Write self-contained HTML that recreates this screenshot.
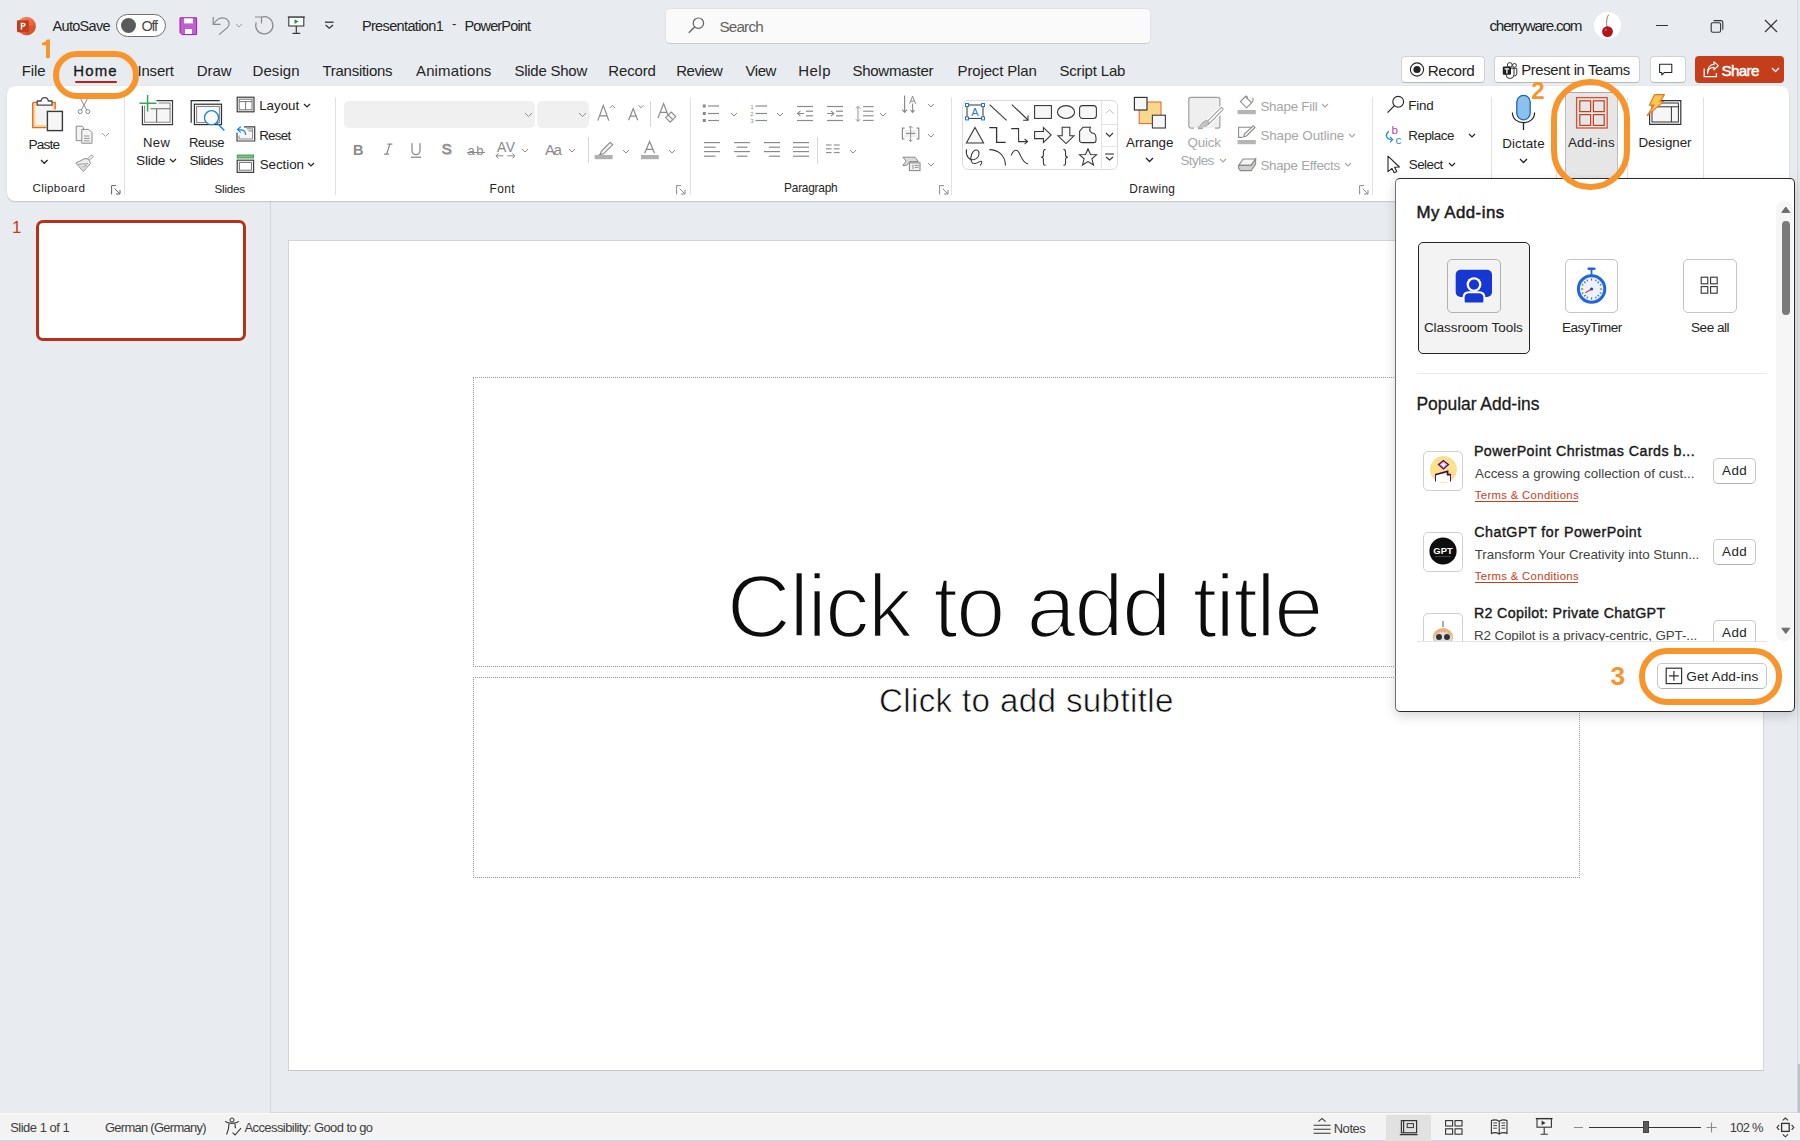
<!DOCTYPE html>
<html><head><meta charset="utf-8">
<style>
*{box-sizing:border-box;margin:0;padding:0}
html,body{width:1800px;height:1141px;overflow:hidden}
body{background:#e8ecf0;font-family:"Liberation Sans",sans-serif;color:#242424;position:relative}
.a{position:absolute;white-space:nowrap}
.tx{line-height:1}
svg.a{overflow:visible}
</style></head><body>
<svg class="a" style="left:14px;top:14px;" width="24" height="24" viewBox="0 0 24 24"><defs><linearGradient id="pg" x1="0" y1="0" x2="1" y2="1"><stop offset="0" stop-color="#ff8f6b"/><stop offset="0.5" stop-color="#ed6c47"/><stop offset="1" stop-color="#c43e1c"/></linearGradient></defs>
<circle cx="12.5" cy="12" r="9.3" fill="url(#pg)"/><path d="M12.5 12 L21.8 12 A9.3 9.3 0 0 1 12.5 21.3Z" fill="#d35230" opacity=".7"/>
<rect x="3" y="6.2" width="12" height="12" rx="1" fill="#c43e1c"/><path d="M6.7 15.5V8.8h2.6c1.5 0 2.3.7 2.3 1.9s-.9 2-2.3 2H8.2v2.8z M8.2 10v1.6h1c.6 0 .9-.3.9-.8s-.3-.8-.9-.8z" fill="#fff"/></svg>
<div class="a tx " style="left:52.50px;top:19.00px;font-size:14.53px;color:#242424;letter-spacing:-0.686px;">AutoSave</div>
<div class="a" style="left:116px;top:14px;width:50px;height:23px;border:1px solid #6e6e6e;border-radius:12px;background:#fff"></div>
<div class="a" style="left:120.5px;top:18px;width:15px;height:15px;border-radius:50%;background:#5a5a5a"></div>
<div class="a tx " style="left:141.40px;top:19.00px;font-size:14.53px;color:#4a4a4a;letter-spacing:-1.250px;">Off</div>
<svg class="a" style="left:179px;top:17px;" width="19" height="19" viewBox="0 0 19 19"><path d="M1 0.8H17.6V17.6H3L1 15.6Z" fill="#c060cf" stroke="#9a1fae" stroke-width="1"/><rect x="5" y="1.4" width="9" height="5" fill="#fff"/><rect x="6" y="12" width="7" height="5" fill="#fff"/></svg>
<svg class="a" style="left:212px;top:16px;" width="20" height="20" viewBox="0 0 20 20"><path d="M1.2 1 V8.4 H8.6" fill="none" stroke="#8a8a8a" stroke-width="1.2"/><path d="M1.6 8 C4.2 3.2 9 0.8 13 2.2 C17.8 4 18.2 8.8 15.4 11.6 L7 18.6" fill="none" stroke="#8a8a8a" stroke-width="1.2"/></svg>
<svg class="a" style="left:235.0px;top:22.5px;" width="8" height="5.0" viewBox="0 0 8 5.0"><path d="M1 1 L4.0 4.0 L7 1" fill="none" stroke="#9a9a9a" stroke-width="1"/></svg>
<svg class="a" style="left:254px;top:16px;" width="20" height="20" viewBox="0 0 20 20"><path d="M1 1 H7.5 V7.4" fill="none" stroke="#8a8a8a" stroke-width="1.2"/><path d="M7.5 1.2 A8.6 8.6 0 1 1 2.2 6.4" fill="none" stroke="#8a8a8a" stroke-width="1.2"/></svg>
<svg class="a" style="left:287px;top:16px;" width="19" height="20" viewBox="0 0 19 20"><path d="M0.8 1.2H17.8" stroke="#3a3a3a" stroke-width="1.4"/><rect x="1.8" y="1.2" width="15" height="8.8" fill="#fff" stroke="#3a3a3a" stroke-width="1.1"/><path d="M7.5 3.2 L11.6 5.6 L7.5 8z" fill="#1e9e3a"/><path d="M9.3 10V17.2 M5.5 17.4H13.2" stroke="#3a3a3a" stroke-width="1.2"/></svg>
<svg class="a" style="left:324px;top:21px;" width="11" height="9" viewBox="0 0 11 9"><path d="M1 1.2H9.6" stroke="#333" stroke-width="1.3"/><path d="M1.6 4 L5.3 7.2 L9 4" fill="none" stroke="#333" stroke-width="1.3"/></svg>
<div class="a tx " style="left:361.90px;top:19.00px;font-size:14.53px;color:#242424;letter-spacing:-0.642px;">Presentation1</div>
<div class="a tx " style="left:452.00px;top:17.00px;font-size:13.00px;color:#242424;">-</div>
<div class="a tx " style="left:464.40px;top:19.00px;font-size:14.53px;color:#242424;letter-spacing:-0.833px;">PowerPoint</div>
<div class="a" style="left:664.5px;top:8px;width:486px;height:36px;background:#fafafa;border:1px solid #e2e2e2;border-bottom-color:#c9c9c9;border-radius:5px"></div>
<svg class="a" style="left:687px;top:16px;" width="19" height="19" viewBox="0 0 19 19"><circle cx="11.4" cy="7.2" r="5.2" fill="none" stroke="#5f5f5f" stroke-width="1.2"/><path d="M7.6 11 L1.8 16.8" stroke="#5f5f5f" stroke-width="1.3"/></svg>
<div class="a tx " style="left:719.40px;top:19.00px;font-size:15.26px;color:#616161;letter-spacing:-0.800px;">Search</div>
<div class="a tx " style="left:1489.40px;top:18.20px;font-size:15.26px;color:#242424;letter-spacing:-1.177px;">cherryware.com</div>
<div class="a" style="left:1594px;top:12px;width:27px;height:27px;border-radius:50%;background:#fff"></div>
<svg class="a" style="left:1594px;top:12px;" width="27" height="27" viewBox="0 0 27 27"><path d="M14.6 2.6 C12.4 6 12.2 10 13 15.4" fill="none" stroke="#7a8a4a" stroke-width="1"/><circle cx="13.5" cy="19.6" r="5.4" fill="#b5121b"/><circle cx="11.8" cy="18" r="1.4" fill="#e56060" opacity=".6"/></svg>
<div class="a" style="left:1656px;top:24.5px;width:12px;height:1.2px;background:#333"></div>
<svg class="a" style="left:1709px;top:19px;" width="15" height="14" viewBox="0 0 15 14"><rect x="2.2" y="3.8" width="9.4" height="9.4" rx="1.5" fill="none" stroke="#333" stroke-width="1.1"/><path d="M4.6 1.6 H11.8 Q13.8 1.6 13.8 3.6 V10.8" fill="none" stroke="#333" stroke-width="1.1"/></svg>
<svg class="a" style="left:1764px;top:19px;" width="14" height="14" viewBox="0 0 14 14"><path d="M1 1 L13 13 M13 1 L1 13" stroke="#333" stroke-width="1.2"/></svg>
<div class="a tx " style="left:21.80px;top:64.00px;font-size:14.97px;color:#242424;letter-spacing:-0.100px;">File</div>
<div class="a tx " style="left:73.30px;top:64.00px;font-size:14.97px;color:#1a1a1a;letter-spacing:1.100px;-webkit-text-stroke:0.3px #1a1a1a">Home</div>
<div class="a tx " style="left:137.45px;top:64.00px;font-size:14.97px;color:#242424;letter-spacing:-0.170px;">Insert</div>
<div class="a tx " style="left:196.80px;top:64.00px;font-size:14.97px;color:#242424;letter-spacing:-0.050px;">Draw</div>
<div class="a tx " style="left:252.55px;top:64.00px;font-size:14.97px;color:#242424;letter-spacing:0.080px;">Design</div>
<div class="a tx " style="left:322.50px;top:64.00px;font-size:14.97px;color:#242424;letter-spacing:-0.260px;">Transitions</div>
<div class="a tx " style="left:416.00px;top:64.00px;font-size:14.97px;color:#242424;letter-spacing:0.144px;">Animations</div>
<div class="a tx " style="left:514.40px;top:64.00px;font-size:14.97px;color:#242424;letter-spacing:-0.222px;">Slide Show</div>
<div class="a tx " style="left:608.30px;top:64.00px;font-size:14.97px;color:#242424;letter-spacing:-0.140px;">Record</div>
<div class="a tx " style="left:676.30px;top:64.00px;font-size:14.97px;color:#242424;letter-spacing:-0.520px;">Review</div>
<div class="a tx " style="left:745.50px;top:64.00px;font-size:14.97px;color:#242424;letter-spacing:-0.433px;">View</div>
<div class="a tx " style="left:798.30px;top:64.00px;font-size:14.97px;color:#242424;letter-spacing:0.467px;">Help</div>
<div class="a tx " style="left:852.40px;top:64.00px;font-size:14.97px;color:#242424;letter-spacing:-0.233px;">Showmaster</div>
<div class="a tx " style="left:957.55px;top:64.00px;font-size:14.97px;color:#242424;letter-spacing:-0.132px;">Project Plan</div>
<div class="a tx " style="left:1059.40px;top:64.00px;font-size:14.97px;color:#242424;letter-spacing:-0.156px;">Script Lab</div>
<div class="a" style="left:74.5px;top:81px;width:42.5px;height:2.2px;background:#b7261a;border-radius:1px"></div>
<div class="a" style="left:1401px;top:56px;width:84px;height:27px;background:#fff;border:1px solid #d1d1d1;border-bottom-color:#b9b9b9;border-radius:4px"></div>
<svg class="a" style="left:1409px;top:62px;" width="16" height="16" viewBox="0 0 16 16"><circle cx="8" cy="7.5" r="6.6" fill="none" stroke="#242424" stroke-width="1.1"/><circle cx="8" cy="7.5" r="3.6" fill="#242424"/></svg>
<div class="a tx " style="left:1427.80px;top:62.50px;font-size:15.26px;color:#242424;letter-spacing:-0.440px;">Record</div>
<div class="a" style="left:1494.4px;top:56px;width:146px;height:27px;background:#fff;border:1px solid #d1d1d1;border-bottom-color:#b9b9b9;border-radius:4px"></div>
<svg class="a" style="left:1502px;top:62px;" width="17" height="16" viewBox="0 0 17 16"><circle cx="12.5" cy="3.4" r="1.9" fill="none" stroke="#333" stroke-width="1"/><path d="M10 6.3h4.8v5.2a2.4 2.4 0 0 1-4.8 0z" fill="#fff" stroke="#333" stroke-width="1"/><circle cx="7.8" cy="3" r="2.4" fill="#fff" stroke="#333" stroke-width="1"/><path d="M4 6.2h8v6.3a4 4 0 0 1-8 0z" fill="#fff" stroke="#333" stroke-width="1"/><rect x="0.8" y="4.6" width="8.2" height="8.2" rx="1" fill="#1f1f1f"/><path d="M2.6 6.8h4.6M4.9 6.8v4.6" stroke="#fff" stroke-width="1.3"/></svg>
<div class="a tx " style="left:1521.20px;top:63.30px;font-size:14.83px;color:#242424;letter-spacing:-0.347px;">Present in Teams</div>
<div class="a" style="left:1649.5px;top:56px;width:36px;height:27px;background:#fff;border:1px solid #d1d1d1;border-bottom-color:#b9b9b9;border-radius:4px"></div>
<svg class="a" style="left:1658px;top:62px;" width="18" height="16" viewBox="0 0 18 16"><path d="M1.6 2.2H13.8V10.4H6.6L3.8 13V10.4H1.6Z" fill="none" stroke="#242424" stroke-width="1.05" stroke-linejoin="round"/></svg>
<div class="a" style="left:1695px;top:56px;width:89.3px;height:27px;background:#c43e1c;border-radius:4px"></div>
<svg class="a" style="left:1702px;top:61px;" width="18" height="18" viewBox="0 0 18 18"><path d="M2.2 7.6V15.6H14.4V12" fill="none" stroke="#fff" stroke-width="1.3"/><path d="M5.6 12.4 C5.8 8.6 8.4 6.4 12 6.4 V8.8 L16.4 4.6 L12 0.9 V3.4 C7.6 3.4 5.2 7.4 5.6 12.4Z" fill="none" stroke="#fff" stroke-width="1.2" stroke-linejoin="round"/></svg>
<div class="a tx " style="left:1721.40px;top:62.50px;font-size:15.26px;color:#fff;letter-spacing:-0.650px;-webkit-text-stroke:0.45px #fff">Share</div>
<svg class="a" style="left:1770.5px;top:66.75px;" width="9" height="5.5" viewBox="0 0 9 5.5"><path d="M1 1 L4.5 4.5 L8 1" fill="none" stroke="#fff" stroke-width="1.25"/></svg>
<div class="a" style="left:270px;top:201px;width:1px;height:912px;background:#d4d7da"></div>
<div class="a tx " style="left:12.10px;top:220.30px;font-size:16.86px;color:#c43e1c;">1</div>
<div class="a" style="left:36px;top:219.5px;width:210px;height:121px;background:#fff;border:3px solid #b5311b;border-radius:7px"></div>
<div class="a" style="left:288px;top:240px;width:1476px;height:831px;background:#fff;border:1px solid #d4d4d4;border-bottom-color:#c8c8c8"></div>
<div class="a" style="left:473.3px;top:376.8px;width:1107px;height:290px;border:1px dotted #9a9a9a"></div>
<div class="a" style="left:473.3px;top:676.5px;width:1107px;height:201.5px;border:1px dotted #9a9a9a"></div>
<div class="a tx " style="left:726.80px;top:561.80px;font-size:88.95px;color:#0d0d0d;letter-spacing:-1.829px;-webkit-text-stroke:2.6px #fff">Click to add title</div>
<div class="a tx " style="left:878.90px;top:683.80px;font-size:33.14px;color:#0d0d0d;letter-spacing:0.365px;-webkit-text-stroke:0.6px #fff">Click to add subtitle</div>
<div class="a" style="left:1797px;top:0px;width:1px;height:1141px;background:#d3d7db"></div>
<div class="a" style="left:1798px;top:0px;width:2px;height:1141px;background:#e4e8ec"></div>
<div class="a" style="left:1798px;top:1064px;width:2px;height:53px;background:#b9c3cc"></div>
<div class="a" style="left:1798px;top:1117px;width:2px;height:24px;background:#1a1a1a"></div>
<div class="a" style="left:7px;top:86px;width:1782.3px;height:114.5px;background:#fff;border-radius:8px;box-shadow:0 1px 1.5px rgba(0,0,0,.16),0 0 1px rgba(0,0,0,.08)"></div>
<svg class="a" style="left:25px;top:90px;" width="45" height="45" viewBox="0 0 45 45"><path d="M7.8 12.4 H30.1 V19.5 M21.4 37.6 H7.8 V12.4" fill="#fdf3d6" stroke="#e36c25" stroke-width="1.5"/>
<path d="M28.2 19.5 V14.4 H9.8 V35.6 H21.4" fill="none" stroke="#f9d98a" stroke-width="1.6"/><rect x="10.8" y="15.4" width="16.4" height="19.2" fill="#f4f4f4"/>
<path d="M12.2 15.2 V11 H16.2 C16.4 6.6 23 6.6 23.2 11 H27 V15.2Z" fill="#fff" stroke="#4a4a4a" stroke-width="1.3" stroke-linejoin="round"/>
<rect x="22.4" y="21.4" width="15" height="19.2" fill="#f6f6f6" stroke="#3a3a3a" stroke-width="1.4"/></svg>
<div class="a tx " style="left:28.50px;top:138.00px;font-size:13.66px;color:#242424;letter-spacing:-0.850px;">Paste</div>
<svg class="a" style="left:39.900000000000006px;top:158.85px;" width="8.6" height="5.3" viewBox="0 0 8.6 5.3"><path d="M1 1 L4.3 4.3 L7.6 1" fill="none" stroke="#242424" stroke-width="1.2"/></svg>
<svg class="a" style="left:76px;top:98px;" width="16" height="17" viewBox="0 0 16 17"><path d="M4.4 0.5 L10.8 12.2 M11.6 0.5 L5.2 12.2" stroke="#8a8a8a" stroke-width="1"/><circle cx="4.2" cy="13.6" r="2" fill="none" stroke="#8a8a8a" stroke-width="1"/><circle cx="11.8" cy="13.6" r="2" fill="none" stroke="#8a8a8a" stroke-width="1"/></svg>
<svg class="a" style="left:74px;top:125px;" width="20" height="20" viewBox="0 0 20 20"><path d="M2.2 1.2H8.2L9.4 2.4V15.6H2.2Z" fill="#f4f4f4" stroke="#8a8a8a" stroke-width="1"/><path d="M7.8 4.4H14.8L18 7.6V18.2H7.8Z" fill="#f4f4f4" stroke="#8a8a8a" stroke-width="1"/><path d="M10 11H15.6M10 13.4H15.6M10 15.8H15.6" stroke="#8a8a8a" stroke-width=".9"/></svg>
<svg class="a" style="left:100.5px;top:132.25px;" width="9" height="5.5" viewBox="0 0 9 5.5"><path d="M1 1 L4.5 4.5 L8 1" fill="none" stroke="#a0a0a0" stroke-width="1"/></svg>
<svg class="a" style="left:74px;top:154px;" width="20" height="20" viewBox="0 0 20 20"><path d="M17.6 0.9 L19.2 2.5 L15.2 6.5 L13.6 4.9Z" fill="#fff" stroke="#8a8a8a" stroke-width="1"/><path d="M13.6 4.9 L15.2 6.5 L16.6 9.2 L9.4 17.6 L1.9 9 L10.9 4.6Z" fill="#efefef" stroke="#8a8a8a" stroke-width="1" stroke-linejoin="round"/><path d="M4.2 10.4 L14 9.6 M6.6 13.2 L13 11.4" stroke="#8a8a8a" stroke-width=".9"/><path d="M4.4 11 L9.4 17.2 L12.6 13.4Z" fill="#d6d6d6"/></svg>
<div class="a tx " style="left:32.60px;top:182.00px;font-size:11.63px;color:#242424;letter-spacing:0.312px;">Clipboard</div>
<svg class="a" style="left:111px;top:185px;" width="10" height="10" viewBox="0 0 10 10"><path d="M0.6 9.4V0.6H5 M3.6 3.6L9 9 M9 5V9H5" fill="none" stroke="#616161" stroke-width="1"/></svg>
<div class="a" style="left:124.4px;top:97px;width:1px;height:98px;background:#e1e1e1"></div>
<svg class="a" style="left:135px;top:90px;" width="40" height="40" viewBox="0 0 40 40"><rect x="9.5" y="13" width="25.6" height="19.2" fill="#f6f6f6"/>
<path d="M21.4 10.6 H37.5 V34.6 H7.4 V15.8" fill="none" stroke="#3c3c3c" stroke-width="1.2"/>
<path d="M23.5 13 H35.1 V32.2 H9.5 V15.8" fill="none" stroke="#8a8a8a" stroke-width="1.1"/>
<path d="M15.5 18.7 H35.1 M21.6 18.7 V32.2" stroke="#6a6a6a" stroke-width="1.1"/>
<path d="M12.6 5 V21.5 M4.5 13.2 H21.5" stroke="#38a65a" stroke-width="1.5"/></svg>
<div class="a tx " style="left:143.00px;top:136.00px;font-size:13.08px;color:#242424;letter-spacing:0.400px;">New</div>
<div class="a tx " style="left:136.10px;top:154.00px;font-size:13.66px;color:#242424;letter-spacing:-0.250px;">Slide</div>
<svg class="a" style="left:168.5px;top:157.5px;" width="8" height="5.0" viewBox="0 0 8 5.0"><path d="M1 1 L4.0 4.0 L7 1" fill="none" stroke="#242424" stroke-width="1.2"/></svg>
<svg class="a" style="left:135px;top:90px;" width="95" height="45" viewBox="0 0 95 45"><path d="M56.2 32.7 V10.6 H84.7" fill="none" stroke="#2e2e2e" stroke-width="1.2"/>
<rect x="59.4" y="14.2" width="27.1" height="20.4" fill="#f6f6f6" stroke="#2e2e2e" stroke-width="1.2"/>
<rect x="61.6" y="16.5" width="22.8" height="16" fill="#fafafa" stroke="#8a8a8a" stroke-width="1.1"/>
<circle cx="76.5" cy="27.7" r="7" fill="#fbfbfb" stroke="#1f84d6" stroke-width="1.3"/><path d="M81.4 32.6 L89.4 40.6" stroke="#1f84d6" stroke-width="1.4"/></svg>
<div class="a tx " style="left:189.00px;top:136.00px;font-size:13.08px;color:#242424;letter-spacing:-0.600px;">Reuse</div>
<div class="a tx " style="left:189.60px;top:154.00px;font-size:13.66px;color:#242424;letter-spacing:-0.660px;">Slides</div>
<svg class="a" style="left:236px;top:96px;" width="20" height="18" viewBox="0 0 20 18"><rect x="1.2" y="1.2" width="16.8" height="14.6" fill="#f3f3f3" stroke="#3e3e3e" stroke-width="1.2"/><rect x="3.2" y="3.2" width="12.8" height="10.6" fill="#fff" stroke="#6a6a6a" stroke-width=".9"/><path d="M3.2 5.6H16M9.6 5.6V13.8" stroke="#6a6a6a" stroke-width=".9"/></svg>
<div class="a tx " style="left:259.20px;top:99.00px;font-size:13.37px;color:#242424;letter-spacing:-0.020px;">Layout</div>
<svg class="a" style="left:303.0px;top:102.5px;" width="8" height="5.0" viewBox="0 0 8 5.0"><path d="M1 1 L4.0 4.0 L7 1" fill="none" stroke="#242424" stroke-width="1.2"/></svg>
<svg class="a" style="left:235px;top:124px;" width="21" height="19" viewBox="0 0 21 19"><rect x="4" y="4.8" width="13.6" height="10.2" fill="#f6f6f6"/><path d="M9 2.8 H19.7 V17 H2 V8.4" fill="none" stroke="#3e3e3e" stroke-width="1.2"/><path d="M11.6 4.8 H17.6 V15 H4 V11.6" fill="none" stroke="#7a7a7a" stroke-width=".9"/><path d="M13.4 6.9 H17.6" stroke="#7a7a7a" stroke-width=".9"/><path d="M10.6 11 C10.8 7 8.6 5.6 3 5.6" fill="none" stroke="#1f84d6" stroke-width="1.3"/><path d="M5.8 2.6 L2.6 5.6 L5.8 8.6" fill="none" stroke="#1f84d6" stroke-width="1.3"/></svg>
<div class="a tx " style="left:259.20px;top:128.50px;font-size:13.37px;color:#242424;letter-spacing:-0.725px;">Reset</div>
<svg class="a" style="left:236px;top:154px;" width="20" height="20" viewBox="0 0 20 20"><rect x="1.2" y="1" width="16.4" height="3" fill="#7ec28a" stroke="#2e8f3f" stroke-width=".8"/><rect x="1.2" y="6.2" width="16.4" height="12.2" fill="#f3f3f3" stroke="#3e3e3e" stroke-width="1.2"/><rect x="3.4" y="8.4" width="12" height="7.8" fill="#fff" stroke="#6a6a6a" stroke-width=".9"/></svg>
<div class="a tx " style="left:259.70px;top:157.50px;font-size:13.37px;color:#242424;letter-spacing:-0.033px;">Section</div>
<svg class="a" style="left:307.2px;top:161.5px;" width="8" height="5.0" viewBox="0 0 8 5.0"><path d="M1 1 L4.0 4.0 L7 1" fill="none" stroke="#242424" stroke-width="1.2"/></svg>
<div class="a tx " style="left:214.50px;top:183.00px;font-size:11.63px;color:#242424;letter-spacing:-0.220px;">Slides</div>
<div class="a" style="left:334.5px;top:97px;width:1px;height:98px;background:#e1e1e1"></div>
<div class="a" style="left:344px;top:100.5px;width:191px;height:27.3px;background:#f0f0f0;border-radius:5px"></div>
<svg class="a" style="left:523.5px;top:111.75px;" width="9" height="5.5" viewBox="0 0 9 5.5"><path d="M1 1 L4.5 4.5 L8 1" fill="none" stroke="#8a8a8a" stroke-width="1"/></svg>
<div class="a" style="left:537px;top:100.5px;width:51.6px;height:27.3px;background:#f0f0f0;border-radius:5px"></div>
<svg class="a" style="left:577.5px;top:111.75px;" width="9" height="5.5" viewBox="0 0 9 5.5"><path d="M1 1 L4.5 4.5 L8 1" fill="none" stroke="#8a8a8a" stroke-width="1"/></svg>
<svg class="a" style="left:595px;top:102px;" width="22" height="20" viewBox="0 0 22 20"><path d="M2.8 18.6 L8.3 3.4 L13.8 18.6 M4.6 13.8H12" fill="none" stroke="#8a8a8a" stroke-width="1.2"/><path d="M14.8 6 L17.4 3.4 L20 6" fill="none" stroke="#8a8a8a" stroke-width="1"/></svg>
<svg class="a" style="left:626px;top:104px;" width="20" height="18" viewBox="0 0 20 18"><path d="M2.6 16.2 L7.2 4.6 L11.8 16.2 M4.2 12.2H10.2" fill="none" stroke="#8a8a8a" stroke-width="1.2"/><path d="M12.4 1.2 L15 3.8 L17.6 1.2" fill="none" stroke="#8a8a8a" stroke-width="1"/></svg>
<div class="a" style="left:650.4px;top:101px;width:1px;height:26px;background:#d6d6d6"></div>
<svg class="a" style="left:656px;top:102px;" width="22" height="22" viewBox="0 0 22 22"><path d="M2 16 L7.6 1.6 L13.2 16 M4.2 10.4 H11" fill="none" stroke="#8a8a8a" stroke-width="1.2"/><path d="M9.6 15.6 L15.2 10 L19.8 14.6 L14.2 20.2Z" fill="#fff" stroke="#8a8a8a" stroke-width="1.1"/><path d="M12.2 13 L16.8 17.6" stroke="#8a8a8a" stroke-width="1.1"/></svg>
<div class="a tx " style="left:353.10px;top:142.60px;font-size:14.53px;color:#8a8a8a;font-weight:700;">B</div>
<svg class="a" style="left:382px;top:143px;" width="12" height="13" viewBox="0 0 12 13"><path d="M5.4 1.2H10.4M2 11.2H7M7.9 1.2 L4.5 11.2" fill="none" stroke="#8a8a8a" stroke-width="1.2"/></svg>
<svg class="a" style="left:409px;top:142px;" width="14" height="17" viewBox="0 0 14 17"><path d="M3 1.2V8.6A4 4 0 0 0 11 8.6V1.2" fill="none" stroke="#8a8a8a" stroke-width="1.3"/><path d="M2 15.2H12" stroke="#8a8a8a" stroke-width="1.3"/></svg>
<div class="a tx " style="left:442.40px;top:142.00px;font-size:15.12px;color:#d4d4d4;-webkit-text-stroke:0.4px #d4d4d4">S</div>
<div class="a tx " style="left:441.40px;top:141.30px;font-size:15.12px;color:#8a8a8a;-webkit-text-stroke:0.4px #8a8a8a">S</div>
<div class="a tx " style="left:467.50px;top:143.60px;font-size:13.00px;color:#8a8a8a;letter-spacing:1.600px;">ab</div>
<div class="a" style="left:466.5px;top:151.6px;width:18px;height:1.1px;background:#8a8a8a"></div>
<div class="a tx " style="left:497.00px;top:140.50px;font-size:13.95px;color:#8a8a8a;letter-spacing:0.400px;">AV</div>
<svg class="a" style="left:495px;top:152.2px;" width="22" height="8" viewBox="0 0 22 8"><path d="M1 3.8H8.4M3.4 1.2 L1 3.8 L3.4 6.4 M12.4 3.8H19.8 M17.4 1.2 L19.8 3.8 L17.4 6.4" fill="none" stroke="#8a8a8a" stroke-width="1"/></svg>
<svg class="a" style="left:521.0px;top:147.5px;" width="8" height="5.0" viewBox="0 0 8 5.0"><path d="M1 1 L4.0 4.0 L7 1" fill="none" stroke="#8a8a8a" stroke-width="1"/></svg>
<div class="a tx " style="left:545.00px;top:142.00px;font-size:15.12px;color:#8a8a8a;letter-spacing:-1.500px;">Aa</div>
<svg class="a" style="left:568.0px;top:147.5px;" width="8" height="5.0" viewBox="0 0 8 5.0"><path d="M1 1 L4.0 4.0 L7 1" fill="none" stroke="#8a8a8a" stroke-width="1"/></svg>
<div class="a" style="left:587.6px;top:137px;width:1px;height:26px;background:#d6d6d6"></div>
<svg class="a" style="left:594px;top:140px;" width="20" height="21" viewBox="0 0 20 21"><path d="M17 3.2 L18.6 4.8 L9.6 13.8 L6.4 14.6 L7.2 11.4 L16.2 2.4Z" fill="#f3f3f3" stroke="#8a8a8a" stroke-width="1.1"/><path d="M6.8 12.6 L4.4 15 L7.6 15Z" fill="#8a8a8a"/><rect x="0.6" y="15" width="18" height="4.2" fill="#b0b0b0"/></svg>
<svg class="a" style="left:622.0px;top:148.5px;" width="8" height="5.0" viewBox="0 0 8 5.0"><path d="M1 1 L4.0 4.0 L7 1" fill="none" stroke="#8a8a8a" stroke-width="1"/></svg>
<svg class="a" style="left:640px;top:140px;" width="20" height="21" viewBox="0 0 20 21"><path d="M4.6 13.2 L9.6 1.6 L14.6 13.2 M6.4 9.4H12.8" fill="none" stroke="#8a8a8a" stroke-width="1.2"/><rect x="1" y="15" width="17.8" height="4.2" fill="#b0b0b0"/></svg>
<svg class="a" style="left:667.5px;top:148.5px;" width="8" height="5.0" viewBox="0 0 8 5.0"><path d="M1 1 L4.0 4.0 L7 1" fill="none" stroke="#8a8a8a" stroke-width="1"/></svg>
<div class="a tx " style="left:489.60px;top:183.50px;font-size:11.92px;color:#242424;letter-spacing:0.367px;">Font</div>
<svg class="a" style="left:676px;top:185px;" width="10" height="10" viewBox="0 0 10 10"><path d="M0.6 9.4V0.6H5 M3.6 3.6L9 9 M9 5V9H5" fill="none" stroke="#8a8a8a" stroke-width="1"/></svg>
<div class="a" style="left:689.5px;top:97px;width:1px;height:98px;background:#e1e1e1"></div>
<svg class="a" style="left:702px;top:104px;" width="18" height="19" viewBox="0 0 18 19"><rect x="0.8" y="0.5" width="3" height="3" fill="#8a8a8a"/><rect x="0.8" y="8.0" width="3" height="3" fill="#8a8a8a"/><rect x="0.8" y="15.0" width="3" height="3" fill="#8a8a8a"/><path d="M6 2H17" stroke="#8a8a8a" stroke-width="1.2"/><path d="M6 9.5H17" stroke="#8a8a8a" stroke-width="1.2"/><path d="M6 16.5H17" stroke="#8a8a8a" stroke-width="1.2"/></svg>
<svg class="a" style="left:729.5px;top:112.0px;" width="8" height="5.0" viewBox="0 0 8 5.0"><path d="M1 1 L4.0 4.0 L7 1" fill="none" stroke="#8a8a8a" stroke-width="1"/></svg>
<svg class="a" style="left:749.5px;top:104px;" width="18" height="20" viewBox="0 0 18 20"><text x="0.6" y="5" font-size="5.6" fill="#8a8a8a" font-family="Liberation Sans">1</text><text x="0.3" y="12" font-size="5.6" fill="#8a8a8a" font-family="Liberation Sans">2</text><text x="0.4" y="19" font-size="5.6" fill="#8a8a8a" font-family="Liberation Sans">3</text><path d="M5.5 2H17" stroke="#8a8a8a" stroke-width="1.2"/><path d="M5.5 9.5H17" stroke="#8a8a8a" stroke-width="1.2"/><path d="M5.5 16.5H17" stroke="#8a8a8a" stroke-width="1.2"/></svg>
<svg class="a" style="left:775.5px;top:112.0px;" width="8" height="5.0" viewBox="0 0 8 5.0"><path d="M1 1 L4.0 4.0 L7 1" fill="none" stroke="#8a8a8a" stroke-width="1"/></svg>
<svg class="a" style="left:796px;top:104px;" width="18" height="19" viewBox="0 0 18 19"><path d="M1 2.5H17" stroke="#8a8a8a" stroke-width="1.2"/><path d="M1 16.5H17" stroke="#8a8a8a" stroke-width="1.2"/><path d="M10 7.2H17" stroke="#8a8a8a" stroke-width="1.2"/><path d="M10 11.8H17" stroke="#8a8a8a" stroke-width="1.2"/><path d="M8 9.5H1.8M4.4 6.8 L1.6 9.5 L4.4 12.2" fill="none" stroke="#8a8a8a" stroke-width="1.1"/></svg>
<svg class="a" style="left:825.5px;top:104px;" width="18" height="19" viewBox="0 0 18 19"><path d="M1 2.5H17" stroke="#8a8a8a" stroke-width="1.2"/><path d="M1 16.5H17" stroke="#8a8a8a" stroke-width="1.2"/><path d="M10 7.2H17" stroke="#8a8a8a" stroke-width="1.2"/><path d="M10 11.8H17" stroke="#8a8a8a" stroke-width="1.2"/><path d="M1.2 9.5H7.6M5 6.8 L7.8 9.5 L5 12.2" fill="none" stroke="#8a8a8a" stroke-width="1.1"/></svg>
<svg class="a" style="left:853.5px;top:104px;" width="22" height="20" viewBox="0 0 22 20"><path d="M9 2.6H19.6" stroke="#8a8a8a" stroke-width="1.1"/><path d="M9 7.2H19.6" stroke="#8a8a8a" stroke-width="1.1"/><path d="M9 11.8H19.6" stroke="#8a8a8a" stroke-width="1.1"/><path d="M9 16.4H19.6" stroke="#8a8a8a" stroke-width="1.1"/><path d="M4 2.4V17.4M1.8 4.6 L4 2.4 L6.2 4.6 M1.8 15.2 L4 17.4 L6.2 15.2" fill="none" stroke="#8a8a8a" stroke-width=".9"/></svg>
<svg class="a" style="left:879.0px;top:112.0px;" width="8" height="5.0" viewBox="0 0 8 5.0"><path d="M1 1 L4.0 4.0 L7 1" fill="none" stroke="#8a8a8a" stroke-width="1"/></svg>
<svg class="a" style="left:902px;top:95px;" width="20" height="21" viewBox="0 0 20 21"><path d="M2.6 0.6V17.4M0.2 14.6 L2.6 17.4 L5 14.6" fill="none" stroke="#8a8a8a" stroke-width="1.2"/><path d="M7.6 8.8 L10.6 1 L13.6 8.8 M8.6 6.2H12.6" fill="none" stroke="#8a8a8a" stroke-width="1"/><path d="M10.6 8.6V17.4M8.6 15.2 L10.6 17.4 L12.6 15.2" fill="none" stroke="#8a8a8a" stroke-width="1.1"/></svg>
<svg class="a" style="left:926.5px;top:103.0px;" width="8" height="5.0" viewBox="0 0 8 5.0"><path d="M1 1 L4.0 4.0 L7 1" fill="none" stroke="#8a8a8a" stroke-width="1"/></svg>
<svg class="a" style="left:901px;top:125px;" width="20" height="19" viewBox="0 0 20 19"><path d="M3.6 3.2H1.4V13.8H3.6 M15.6 3.2H17.8V13.8H15.6" fill="none" stroke="#8a8a8a" stroke-width="1.2"/><rect x="3.4" y="5" width="12.4" height="7" fill="#efefef"/><path d="M5 8.4H14.2" stroke="#8a8a8a" stroke-width="1.1"/><path d="M9.6 1V16.6 M7.8 2.8 L9.6 1 L11.4 2.8 M7.8 14.8 L9.6 16.6 L11.4 14.8" fill="none" stroke="#8a8a8a" stroke-width=".9"/></svg>
<svg class="a" style="left:926.5px;top:132.5px;" width="8" height="5.0" viewBox="0 0 8 5.0"><path d="M1 1 L4.0 4.0 L7 1" fill="none" stroke="#8a8a8a" stroke-width="1"/></svg>
<svg class="a" style="left:902px;top:156px;" width="20" height="17" viewBox="0 0 20 17"><path d="M0.8 1.2H13L16.4 5.6H7.6L4.6 9.4H0.8 L4.2 5.2Z" fill="#dcdcdc" stroke="#8a8a8a" stroke-width="1"/><rect x="7.4" y="6.8" width="10.6" height="7.8" fill="#efefef" stroke="#8a8a8a" stroke-width="1.1"/><path d="M11 8.6V13M12.8 9.4H16.6M12.8 11.4H16.6" stroke="#8a8a8a" stroke-width=".9"/></svg>
<svg class="a" style="left:926.5px;top:162.0px;" width="8" height="5.0" viewBox="0 0 8 5.0"><path d="M1 1 L4.0 4.0 L7 1" fill="none" stroke="#8a8a8a" stroke-width="1"/></svg>
<svg class="a" style="left:703px;top:141px;" width="18" height="17" viewBox="0 0 18 17"><path d="M1 1.6H17" stroke="#8a8a8a" stroke-width="1.2"/><path d="M1 10.6H17" stroke="#8a8a8a" stroke-width="1.2"/><path d="M1 6.2H12.6" stroke="#8a8a8a" stroke-width="1.2"/><path d="M1 15.2H12.6" stroke="#8a8a8a" stroke-width="1.2"/></svg>
<svg class="a" style="left:733px;top:141px;" width="18" height="17" viewBox="0 0 18 17"><path d="M1 1.6H17" stroke="#8a8a8a" stroke-width="1.2"/><path d="M1 10.6H17" stroke="#8a8a8a" stroke-width="1.2"/><path d="M3.6 6.2H14.4" stroke="#8a8a8a" stroke-width="1.2"/><path d="M3.6 15.2H14.4" stroke="#8a8a8a" stroke-width="1.2"/></svg>
<svg class="a" style="left:762.5px;top:141px;" width="18" height="17" viewBox="0 0 18 17"><path d="M1 1.6H17" stroke="#8a8a8a" stroke-width="1.2"/><path d="M1 10.6H17" stroke="#8a8a8a" stroke-width="1.2"/><path d="M5.8 6.2H17" stroke="#8a8a8a" stroke-width="1.2"/><path d="M5.8 15.2H17" stroke="#8a8a8a" stroke-width="1.2"/></svg>
<svg class="a" style="left:792px;top:141px;" width="18" height="17" viewBox="0 0 18 17"><path d="M1 1.6H17" stroke="#8a8a8a" stroke-width="1.2"/><path d="M1 6.2H17" stroke="#8a8a8a" stroke-width="1.2"/><path d="M1 10.6H17" stroke="#8a8a8a" stroke-width="1.2"/><path d="M1 15.2H17" stroke="#8a8a8a" stroke-width="1.2"/></svg>
<div class="a" style="left:817px;top:137px;width:1px;height:27px;background:#d6d6d6"></div>
<svg class="a" style="left:825px;top:144px;" width="17" height="10" viewBox="0 0 17 10"><path d="M1 1H6.6" stroke="#8a8a8a" stroke-width="1.1"/><path d="M1 4.8H6.6" stroke="#8a8a8a" stroke-width="1.1"/><path d="M1 8.6H6.6" stroke="#8a8a8a" stroke-width="1.1"/><path d="M8.8 1H14.6" stroke="#8a8a8a" stroke-width="1.1"/><path d="M8.8 4.8H14.6" stroke="#8a8a8a" stroke-width="1.1"/><path d="M8.8 8.6H14.6" stroke="#8a8a8a" stroke-width="1.1"/></svg>
<svg class="a" style="left:848.5px;top:148.5px;" width="8" height="5.0" viewBox="0 0 8 5.0"><path d="M1 1 L4.0 4.0 L7 1" fill="none" stroke="#8a8a8a" stroke-width="1"/></svg>
<div class="a tx " style="left:784.10px;top:183.00px;font-size:11.92px;color:#242424;letter-spacing:-0.250px;">Paragraph</div>
<svg class="a" style="left:939px;top:185px;" width="10" height="10" viewBox="0 0 10 10"><path d="M0.6 9.4V0.6H5 M3.6 3.6L9 9 M9 5V9H5" fill="none" stroke="#8a8a8a" stroke-width="1"/></svg>
<div class="a" style="left:951px;top:97px;width:1px;height:98px;background:#e1e1e1"></div>
<div class="a" style="left:962.4px;top:100.3px;width:155.2px;height:69.4px;border:1px solid #dcdcdc;border-radius:6px;background:#fff"></div>
<div class="a" style="left:1100.6px;top:101px;width:1px;height:68px;background:#e3e3e3"></div>
<div class="a" style="left:1101px;top:123.6px;width:16px;height:1px;background:#e3e3e3"></div>
<div class="a" style="left:1101px;top:145.8px;width:16px;height:1px;background:#e3e3e3"></div>
<svg class="a" style="left:1105px;top:109px;" width="9" height="5" viewBox="0 0 9 5"><path d="M0.6 4.4 L4.5 0.8 L8.4 4.4" fill="none" stroke="#bdbdbd" stroke-width="1"/></svg>
<svg class="a" style="left:1104.5px;top:132.05px;" width="9" height="5.5" viewBox="0 0 9 5.5"><path d="M1 1 L4.5 4.5 L8 1" fill="none" stroke="#333" stroke-width="1.1"/></svg>
<svg class="a" style="left:1104px;top:153px;" width="11" height="9" viewBox="0 0 11 9"><path d="M1 1H10" stroke="#333" stroke-width="1.1"/><path d="M2 4 L5.5 7 L9 4" fill="none" stroke="#333" stroke-width="1.1"/></svg>
<svg class="a" style="left:965.0px;top:102.5px;" width="20" height="18" viewBox="0 0 20 18"><rect x="2" y="2" width="16" height="13.4" fill="#fff" stroke="#333" stroke-width="1"/><text x="10" y="13" text-anchor="middle" font-size="11" font-family="Liberation Sans" fill="#1e78d4">A</text><rect x="0.5" y="0.5" width="3" height="3" fill="#fff" stroke="#1e78d4" stroke-width="1"/><rect x="16.5" y="0.5" width="3" height="3" fill="#fff" stroke="#1e78d4" stroke-width="1"/><rect x="0.5" y="13.9" width="3" height="3" fill="#fff" stroke="#1e78d4" stroke-width="1"/><rect x="16.5" y="13.9" width="3" height="3" fill="#fff" stroke="#1e78d4" stroke-width="1"/></svg>
<svg class="a" style="left:987.7px;top:102.5px;" width="20" height="18" viewBox="0 0 20 18"><path d="M1.6 1.6 L18.6 17.4" stroke="#333" stroke-width="1.05"/></svg>
<svg class="a" style="left:1010.4px;top:102.5px;" width="20" height="18" viewBox="0 0 20 18"><path d="M1.8 1.6 L18 17" stroke="#333" stroke-width="1.05"/><path d="M18 12.4V17.2H13.2" fill="none" stroke="#333" stroke-width="1.05"/></svg>
<svg class="a" style="left:1033.0px;top:102.5px;" width="20" height="18" viewBox="0 0 20 18"><rect x="1.6" y="2.6" width="16.8" height="12.8" fill="#f7f7f7" stroke="#333" stroke-width="1.05"/></svg>
<svg class="a" style="left:1056.0px;top:102.5px;" width="20" height="18" viewBox="0 0 20 18"><ellipse cx="10" cy="9" rx="8.6" ry="6.4" fill="#f7f7f7" stroke="#333" stroke-width="1.05"/></svg>
<svg class="a" style="left:1078.3px;top:102.5px;" width="20" height="18" viewBox="0 0 20 18"><rect x="1.6" y="2.6" width="16.8" height="12.8" rx="3" fill="#f7f7f7" stroke="#333" stroke-width="1.05"/></svg>
<svg class="a" style="left:965.0px;top:125.6px;" width="20" height="18" viewBox="0 0 20 18"><path d="M10 1.4 L18.6 17 H1.4Z" fill="#f7f7f7" stroke="#333" stroke-width="1.05"/></svg>
<svg class="a" style="left:987.7px;top:125.6px;" width="20" height="18" viewBox="0 0 20 18"><path d="M1.2 1.6H8.6V16.4H17.6" fill="none" stroke="#333" stroke-width="1.3"/></svg>
<svg class="a" style="left:1010.4px;top:125.6px;" width="20" height="18" viewBox="0 0 20 18"><path d="M1.2 2.6H8.6V15.6H17.4" fill="none" stroke="#333" stroke-width="1.05"/><path d="M14.6 13 L17.6 15.6 L14.6 18.2" fill="none" stroke="#333" stroke-width="1.05"/></svg>
<svg class="a" style="left:1033.0px;top:125.6px;" width="20" height="18" viewBox="0 0 20 18"><path d="M1.6 5.4H10.4V1.4 L18.2 9 L10.4 16.6V12.6H1.6Z" fill="#f7f7f7" stroke="#333" stroke-width="1.05"/></svg>
<svg class="a" style="left:1056.0px;top:125.6px;" width="20" height="18" viewBox="0 0 20 18"><path d="M6.2 1.2H13.8V9.8H18 L10 17.6 L2 9.8H6.2Z" fill="#f7f7f7" stroke="#333" stroke-width="1.05"/></svg>
<svg class="a" style="left:1078.3px;top:125.6px;" width="20" height="18" viewBox="0 0 20 18"><path d="M5 1.2H12.4 C10.6 4.4 12.6 7.4 16.4 7.6 C17.6 8.4 18 9.6 18 12 V14.2 Q18 16.6 15.6 16.6 H4 Q1.6 16.6 1.6 14.2 V5.2Z" fill="#f7f7f7" stroke="#333" stroke-width="1.05"/></svg>
<svg class="a" style="left:965.0px;top:148.2px;" width="20" height="18" viewBox="0 0 20 18"><path d="M1.4 1.2 C0.6 8 4 12.6 9 11.6 C15 10.2 15.4 2 11.4 2 C7.2 2 4.6 9.4 6.4 13.6 C8 17 12 15 14.6 13.6 C17 12.4 18 15 15 17.4" fill="none" stroke="#333" stroke-width="1.05"/></svg>
<svg class="a" style="left:987.7px;top:148.2px;" width="20" height="18" viewBox="0 0 20 18"><path d="M1.4 1.6 C9 1.6 17.4 6.6 17.4 17.4" fill="none" stroke="#333" stroke-width="1.05"/></svg>
<svg class="a" style="left:1010.4px;top:148.2px;" width="20" height="18" viewBox="0 0 20 18"><path d="M1.2 7.4 C4 1 7.4 0.6 10 6.6 C12.8 13 14.6 15.4 18.2 16" fill="none" stroke="#333" stroke-width="1.05"/></svg>
<svg class="a" style="left:1033.0px;top:148.2px;" width="20" height="18" viewBox="0 0 20 18"><path d="M12.6 1.2 C10.4 1.2 10.4 2.4 10.4 4.6 V7.2 C10.4 8.6 9.6 9.2 8 9.2 C9.6 9.2 10.4 9.8 10.4 11.2 V14 C10.4 16.2 10.4 17.2 12.6 17.2" fill="none" stroke="#333" stroke-width="1.05"/></svg>
<svg class="a" style="left:1056.0px;top:148.2px;" width="20" height="18" viewBox="0 0 20 18"><path d="M7.4 1.2 C9.6 1.2 9.6 2.4 9.6 4.6 V7.2 C9.6 8.6 10.4 9.2 12 9.2 C10.4 9.2 9.6 9.8 9.6 11.2 V14 C9.6 16.2 9.6 17.2 7.4 17.2" fill="none" stroke="#333" stroke-width="1.05"/></svg>
<svg class="a" style="left:1078.3px;top:148.2px;" width="20" height="18" viewBox="0 0 20 18"><path d="M10 0.8 L12.5 6.4 L18.6 6.8 L13.9 10.8 L15.5 17 L10 13.6 L4.5 17 L6.1 10.8 L1.4 6.8 L7.5 6.4Z" fill="#f7f7f7" stroke="#333" stroke-width="1.05"/></svg>
<svg class="a" style="left:1132px;top:95px;" width="36" height="36" viewBox="0 0 36 36"><rect x="7.2" y="7" width="21.8" height="21.6" fill="#f8d88e" stroke="#e3702a" stroke-width="1.1"/><rect x="2.4" y="2.4" width="12.6" height="12.6" fill="#f6f6f6" stroke="#2e2e2e" stroke-width="1.15"/><rect x="20.4" y="20.2" width="13" height="12.8" fill="#f6f6f6" stroke="#444" stroke-width="1.15"/></svg>
<div class="a tx " style="left:1126.00px;top:136.00px;font-size:13.37px;color:#242424;letter-spacing:-0.017px;">Arrange</div>
<svg class="a" style="left:1144.9px;top:157.25px;" width="9" height="5.5" viewBox="0 0 9 5.5"><path d="M1 1 L4.5 4.5 L8 1" fill="none" stroke="#242424" stroke-width="1.3"/></svg>
<svg class="a" style="left:1187px;top:95px;" width="40" height="40" viewBox="0 0 40 40"><rect x="1.8" y="2.4" width="31.1" height="30.7" rx="2.2" fill="#efefef" stroke="#a0a0a0" stroke-width="1.2"/><path d="M34.6 14.2 L20.6 28.2" stroke="#fff" stroke-width="6.4" stroke-linecap="round"/><path d="M34.6 14.2 L20.6 28.2" stroke="#a0a0a0" stroke-width="4" stroke-linecap="round"/><path d="M34.6 14.2 L20.6 28.2" stroke="#fff" stroke-width="1.8" stroke-linecap="round"/><path d="M9.6 33.6 C14 34.4 20 32.4 22 27.6 L19.6 25.4 C14.6 26.4 14 31.8 9.6 33.6Z" fill="#c6c6c6" stroke="#a0a0a0" stroke-width="1" stroke-linejoin="round"/><path d="M7 33.1 H11 M16 33.1 H28" stroke="#fff" stroke-width="1.6"/></svg>
<div class="a tx " style="left:1187.60px;top:136.00px;font-size:13.37px;color:#a6a6a6;letter-spacing:-0.200px;">Quick</div>
<div class="a tx " style="left:1180.40px;top:154.00px;font-size:13.37px;color:#a6a6a6;letter-spacing:-0.500px;">Styles</div>
<svg class="a" style="left:1218.5px;top:157.5px;" width="8" height="5.0" viewBox="0 0 8 5.0"><path d="M1 1 L4.0 4.0 L7 1" fill="none" stroke="#a6a6a6" stroke-width="1.1"/></svg>
<svg class="a" style="left:1237px;top:95px;" width="21" height="21" viewBox="0 0 21 21"><path d="M8.4 1.6 L14.6 7.8 L9.6 12.8 L3.4 6.6Z" fill="#fff" stroke="#8a8a8a" stroke-width="1.1"/><path d="M8.2 1.6 C9.6 0.4 11 2 10 3.4 M14.6 7.8 C16.2 6 16.8 4 15.6 3" fill="none" stroke="#8a8a8a" stroke-width="1.1"/><rect x="0.6" y="15" width="18.2" height="4.2" fill="#b4b4b4"/></svg>
<div class="a tx " style="left:1260.40px;top:99.50px;font-size:13.37px;color:#a6a6a6;letter-spacing:-0.233px;">Shape Fill</div>
<svg class="a" style="left:1321.0px;top:102.5px;" width="8" height="5.0" viewBox="0 0 8 5.0"><path d="M1 1 L4.0 4.0 L7 1" fill="none" stroke="#a6a6a6" stroke-width="1.1"/></svg>
<svg class="a" style="left:1237px;top:125px;" width="21" height="21" viewBox="0 0 21 21"><path d="M14 2.2H1.6V12.4H5.6" fill="none" stroke="#8a8a8a" stroke-width="1.1"/><path d="M16.4 0.8 L18 2.4 L9.4 11 L6.6 11.8 L7.4 9Z" fill="#fff" stroke="#8a8a8a" stroke-width="1.1"/><rect x="0.6" y="15" width="18.2" height="4.2" fill="#b4b4b4"/></svg>
<div class="a tx " style="left:1260.40px;top:129.00px;font-size:13.37px;color:#a6a6a6;letter-spacing:-0.067px;">Shape Outline</div>
<svg class="a" style="left:1347.5px;top:132.5px;" width="8" height="5.0" viewBox="0 0 8 5.0"><path d="M1 1 L4.0 4.0 L7 1" fill="none" stroke="#a6a6a6" stroke-width="1.1"/></svg>
<svg class="a" style="left:1237px;top:156px;" width="21" height="17" viewBox="0 0 21 17"><path d="M1.6 9.4 L6.2 3 H18.6 L14.2 9.4Z" fill="#f6f6f6" stroke="#8a8a8a" stroke-width="1.1"/><path d="M1.6 9.4 H14.2 L18.6 3 V8 L14.2 14.6 H3.4 L1.6 12.4Z" fill="#cfcfcf" stroke="#8a8a8a" stroke-width="1.1"/></svg>
<div class="a tx " style="left:1260.40px;top:159.00px;font-size:13.37px;color:#a6a6a6;letter-spacing:-0.267px;">Shape Effects</div>
<svg class="a" style="left:1344.0px;top:162.0px;" width="8" height="5.0" viewBox="0 0 8 5.0"><path d="M1 1 L4.0 4.0 L7 1" fill="none" stroke="#a6a6a6" stroke-width="1.1"/></svg>
<div class="a tx " style="left:1129.30px;top:184.00px;font-size:11.92px;color:#242424;letter-spacing:0.333px;">Drawing</div>
<svg class="a" style="left:1359px;top:185px;" width="10" height="10" viewBox="0 0 10 10"><path d="M0.6 9.4V0.6H5 M3.6 3.6L9 9 M9 5V9H5" fill="none" stroke="#8a8a8a" stroke-width="1"/></svg>
<div class="a" style="left:1372px;top:97px;width:1px;height:98px;background:#e1e1e1"></div>
<svg class="a" style="left:1386px;top:95px;" width="20" height="20" viewBox="0 0 20 20"><circle cx="12.2" cy="6.8" r="5.4" fill="#fff" stroke="#242424" stroke-width="1.1"/><path d="M8.4 10.6 L1.6 17.6" stroke="#242424" stroke-width="1.2"/></svg>
<div class="a tx " style="left:1408.30px;top:99.00px;font-size:13.37px;color:#242424;letter-spacing:-0.167px;">Find</div>
<svg class="a" style="left:1384px;top:124px;" width="21" height="22" viewBox="0 0 21 22"><text x="7.4" y="10" font-size="11.6" font-family="Liberation Sans" fill="#b53fc2">b</text><text x="11.6" y="20" font-size="11.6" font-family="Liberation Sans" fill="#1e84d6">c</text><path d="M5 7.4 C1.2 9.6 1.4 15 7.4 15.6" fill="none" stroke="#1e84d6" stroke-width="1.2"/><path d="M6 12.8 L8.6 15.6 L6 18.4" fill="none" stroke="#1e84d6" stroke-width="1.2"/></svg>
<div class="a tx " style="left:1408.30px;top:129.00px;font-size:13.37px;color:#242424;letter-spacing:-0.483px;">Replace</div>
<svg class="a" style="left:1467.5px;top:132.5px;" width="8" height="5.0" viewBox="0 0 8 5.0"><path d="M1 1 L4.0 4.0 L7 1" fill="none" stroke="#242424" stroke-width="1.2"/></svg>
<svg class="a" style="left:1386px;top:155px;" width="16" height="20" viewBox="0 0 16 20"><path d="M2 1.2 L13.4 12 L8.6 12.2 L10.8 16.6 L8.2 17.8 L6 13.4 L2 16.6Z" fill="#fff" stroke="#242424" stroke-width="1.1" stroke-linejoin="round"/></svg>
<div class="a tx " style="left:1408.80px;top:158.00px;font-size:13.37px;color:#242424;letter-spacing:-0.520px;">Select</div>
<svg class="a" style="left:1447.5px;top:162.0px;" width="8" height="5.0" viewBox="0 0 8 5.0"><path d="M1 1 L4.0 4.0 L7 1" fill="none" stroke="#242424" stroke-width="1.2"/></svg>
<div class="a" style="left:1490.5px;top:97px;width:1px;height:81px;background:#e1e1e1"></div>
<svg class="a" style="left:1510px;top:93px;" width="27" height="40" viewBox="0 0 27 40"><rect x="6.8" y="2.4" width="13.4" height="24.4" rx="6.7" fill="#8cc1ee" stroke="#1e64b4" stroke-width="1.3"/><path d="M2.4 19.6 C2.4 33 24.6 33 24.6 19.6" fill="none" stroke="#242424" stroke-width="1.2"/><path d="M13.5 29V37" stroke="#242424" stroke-width="1.3"/></svg>
<div class="a tx " style="left:1502.20px;top:137.40px;font-size:13.37px;color:#242424;letter-spacing:0.150px;">Dictate</div>
<svg class="a" style="left:1518.7px;top:158.45px;" width="9" height="5.5" viewBox="0 0 9 5.5"><path d="M1 1 L4.5 4.5 L8 1" fill="none" stroke="#242424" stroke-width="1.3"/></svg>
<div class="a" style="left:1555.8px;top:97px;width:1px;height:81px;background:#e1e1e1"></div>
<div class="a" style="left:1565.4px;top:91.6px;width:52.4px;height:86.4px;background:#e6e6e6;border:1px solid #bdbdbd;border-bottom:none;border-top-color:#a9a9a9"></div>
<svg class="a" style="left:1575px;top:96px;" width="34" height="34" viewBox="0 0 34 34"><rect x="1.6" y="1.6" width="30.6" height="30.4" fill="none" stroke="#d35230" stroke-width="1.3"/><rect x="4.8" y="4.8" width="10.8" height="10.8" fill="none" stroke="#c43e1c" stroke-width="1.2"/><rect x="18.4" y="4.8" width="10.8" height="10.8" fill="none" stroke="#c43e1c" stroke-width="1.2"/><rect x="4.8" y="18.6" width="10.8" height="10.8" fill="none" stroke="#c43e1c" stroke-width="1.2"/><rect x="18.4" y="18.6" width="10.8" height="10.8" fill="none" stroke="#c43e1c" stroke-width="1.2"/></svg>
<div class="a tx " style="left:1567.95px;top:136.00px;font-size:13.37px;color:#242424;letter-spacing:0.250px;">Add-ins</div>
<div class="a" style="left:1627.3px;top:97px;width:1px;height:81px;background:#e1e1e1"></div>
<svg class="a" style="left:1645px;top:93px;" width="38" height="34" viewBox="0 0 38 34"><path d="M13 7.6 H35.8 V31.4 H4.6 V19.6" fill="none" stroke="#333" stroke-width="1.2"/><rect x="7" y="10" width="26.4" height="19" fill="#f6f6f6" stroke="#333" stroke-width="1"/><path d="M9 13.8H33.4M26.4 13.8V29" stroke="#333" stroke-width="1"/><path d="M9.6 1.6 H19.4 L15 8.6 H18.6 L2.2 22.6 L8.8 12.2 H4.4Z" fill="#fbc64e" stroke="#e5772a" stroke-width="1.2" stroke-linejoin="round"/></svg>
<div class="a tx " style="left:1638.40px;top:136.00px;font-size:13.37px;color:#242424;letter-spacing:-0.057px;">Designer</div>
<div class="a" style="left:1703.3px;top:97px;width:1px;height:81px;background:#e1e1e1"></div>
<div class="a" style="left:0px;top:1113px;width:1800px;height:28px;background:#f3f3f3;border-top:1px solid #f9f9f9"></div>
<div class="a" style="left:271px;top:1112px;width:1527px;height:1px;background:#d6d9dc"></div>
<div class="a" style="left:0px;top:1140px;width:1800px;height:1px;background:#c7d6e6"></div>
<div class="a tx " style="left:10.20px;top:1122.20px;font-size:12.94px;color:#3d3d3d;letter-spacing:-0.482px;">Slide 1 of 1</div>
<div class="a tx " style="left:104.90px;top:1122.20px;font-size:12.94px;color:#3d3d3d;letter-spacing:-0.693px;">German (Germany)</div>
<svg class="a" style="left:223px;top:1117px;" width="20" height="20" viewBox="0 0 20 20"><circle cx="9" cy="3" r="2" fill="none" stroke="#333" stroke-width="1"/><path d="M2.2 4.4 C5 7 13 7 15.8 4.4 M6 6.8 C6 10 5.4 13.6 3.6 17.4 M12 6.8 C12 9 12 10.2 12.6 11.2 M9.6 15.6 L12 18 L18 11.2" fill="none" stroke="#333" stroke-width="1.1"/></svg>
<div class="a tx " style="left:244.40px;top:1122.20px;font-size:12.94px;color:#3d3d3d;letter-spacing:-0.542px;">Accessibility: Good to go</div>
<svg class="a" style="left:1312px;top:1117px;" width="21" height="21" viewBox="0 0 21 21"><path d="M6.4 4.6 L10 1.4 L13.6 4.6" fill="none" stroke="#333" stroke-width="1.1"/><path d="M1.6 8.2H18.6M1.6 12.2H18.6M1.6 16.2H18.6" stroke="#333" stroke-width="1.1"/></svg>
<div class="a tx " style="left:1333.70px;top:1122.60px;font-size:12.94px;color:#3d3d3d;letter-spacing:-0.425px;">Notes</div>
<div class="a" style="left:1386px;top:1115px;width:45px;height:26px;background:#e1e1e1"></div>
<svg class="a" style="left:1399px;top:1119px;" width="20" height="17" viewBox="0 0 20 17"><rect x="2.4" y="1.6" width="15.2" height="12.2" fill="none" stroke="#333" stroke-width="1.2"/><path d="M0.8 15.6H18.6 M4.6 1.6V13.8" stroke="#333" stroke-width="1.2"/><rect x="8.2" y="4.6" width="6.2" height="4" fill="none" stroke="#333" stroke-width="1"/></svg>
<svg class="a" style="left:1444px;top:1119px;" width="20" height="17" viewBox="0 0 20 17"><rect x="1.6" y="1.6" width="7" height="5.4" fill="none" stroke="#333" stroke-width="1.1"/><rect x="11" y="1.6" width="7" height="5.4" fill="none" stroke="#333" stroke-width="1.1"/><rect x="1.6" y="9.8" width="7" height="5.4" fill="none" stroke="#333" stroke-width="1.1"/><rect x="11" y="9.8" width="7" height="5.4" fill="none" stroke="#333" stroke-width="1.1"/></svg>
<svg class="a" style="left:1490px;top:1118px;" width="19" height="18" viewBox="0 0 19 18"><path d="M9.2 3.2 C6.4 1.6 3.6 1.6 1.4 2.6 V15.4 C3.6 14.4 6.4 14.4 9.2 16 C12 14.4 14.8 14.4 17 15.4 V2.6 C14.8 1.6 12 1.6 9.2 3.2Z M9.2 3.2V16" fill="none" stroke="#333" stroke-width="1.1"/><path d="M3.2 5H7M3.2 7.6H7M3.2 10.2H7M11.4 5H15.2M11.4 7.6H15.2M11.4 10.2H15.2" stroke="#333" stroke-width=".9"/></svg>
<svg class="a" style="left:1535px;top:1117px;" width="19" height="20" viewBox="0 0 19 20"><path d="M0.8 1.6H17.6" stroke="#333" stroke-width="1.3"/><rect x="2" y="1.6" width="14.4" height="8.6" fill="none" stroke="#333" stroke-width="1.1"/><path d="M6.6 3.6 L10.6 5.9 L6.6 8.2z" fill="#333"/><path d="M9.2 10.2V16.8 M5.6 17.2H12.8" stroke="#333" stroke-width="1.1"/></svg>
<div class="a" style="left:1574px;top:1126.6px;width:8.7px;height:1.1px;background:#8a8a8a"></div>
<div class="a" style="left:1588.8px;top:1126.7px;width:112.2px;height:1.2px;background:#333"></div>
<div class="a" style="left:1643px;top:1121px;width:6px;height:11.6px;background:#5a5a5a;border:1px solid #444"></div>
<svg class="a" style="left:1706px;top:1122px;" width="11" height="11" viewBox="0 0 11 11"><path d="M5.5 0.5V10.5M0.5 5.5H10.5" stroke="#8a8a8a" stroke-width="1.1"/></svg>
<div class="a tx " style="left:1729.80px;top:1122.20px;font-size:12.94px;color:#3d3d3d;letter-spacing:-0.750px;">102 %</div>
<svg class="a" style="left:1776px;top:1117px;" width="19" height="21" viewBox="0 0 19 21"><rect x="5.6" y="6.4" width="7.6" height="8" fill="none" stroke="#333" stroke-width="1.3"/><path d="M6.8 3.4 L9.4 1 L12 3.4 M6.8 17.4 L9.4 19.8 L12 17.4 M3.2 7.8 L1 10.4 L3.2 13 M15.6 7.8 L17.8 10.4 L15.6 13" fill="none" stroke="#333" stroke-width="1.1"/></svg>
<div class="a" style="left:1395px;top:178.3px;width:400px;height:533.8px;background:#fff;border:1.4px solid #2b2b2b;border-left-color:#707070;border-radius:5px;box-shadow:0 4px 12px rgba(0,0,0,.16)"></div>
<div class="a tx " style="left:1416.60px;top:205.40px;font-size:16.86px;color:#1a1a1a;letter-spacing:0.467px;-webkit-text-stroke:0.5px #1a1a1a">My Add-ins</div>
<div class="a" style="left:1417.5px;top:241.7px;width:112.2px;height:112.7px;background:#f3f3f3;border:1.6px solid #242424;border-radius:5px"></div>
<div class="a" style="left:1446.5px;top:258.9px;width:54.3px;height:53.8px;background:#f3f3f3;border:1px solid #b0b0b0;border-radius:5px"></div>
<svg class="a" style="left:1450px;top:264px;" width="48" height="42" viewBox="0 0 48 42"><rect x="5.7" y="5.8" width="36.3" height="27.2" rx="5" fill="#1637d2"/><path d="M12.6 38.2 V33.6 Q12.6 27.2 19 27.2 H29 Q35.4 27.2 35.4 33.6 V38.2 Z" fill="#fff"/><path d="M14.6 37.6 V33.8 Q14.6 29.2 19.2 29.2 H28.8 Q33.4 29.2 33.4 33.8 V37.6 Q33.4 38.6 32.4 38.6 H15.6 Q14.6 38.6 14.6 37.6Z" fill="#1637d2"/><circle cx="24" cy="20.6" r="7.4" fill="#fff"/><circle cx="24" cy="20.6" r="5.1" fill="#1637d2"/></svg>
<div class="a tx " style="left:1423.90px;top:320.70px;font-size:13.52px;color:#242424;letter-spacing:-0.050px;">Classroom Tools</div>
<div class="a" style="left:1564.9px;top:258.9px;width:53.5px;height:53.8px;background:#fff;border:1px solid #c4c4c4;border-radius:5px"></div>
<svg class="a" style="left:1568px;top:264px;" width="46" height="46" viewBox="0 0 46 46"><defs><pattern id="hp" width="4" height="4" patternUnits="userSpaceOnUse" patternTransform="rotate(45)"><rect width="4" height="4" fill="#fff"/><rect width="1" height="4" fill="#f1f1f1"/></pattern></defs>
<rect x="8" y="6" width="30" height="34" fill="url(#hp)"/>
<rect x="19.4" y="3.4" width="8.2" height="2.6" rx="1.2" fill="#2366d8"/><path d="M23.5 6V11" stroke="#2366d8" stroke-width="1.8"/>
<circle cx="23.6" cy="25" r="13.2" fill="#eef1f7" stroke="#2366d8" stroke-width="3"/>
<path d="M23.6 14.4V16.6M23.6 33.4V35.6M13 25H15.2M32 25H34.2M16.2 17.6L17.6 19M31 17.6L29.6 19M16.2 32.4L17.6 31M31 32.4L29.6 31M19 15.6L19.6 17.2M28.2 15.6L27.6 17.2M13.8 20.6L15.4 21.2M33.4 20.6L31.8 21.2M13.8 29.4L15.4 28.8M33.4 29.4L31.8 28.8M19 34.4L19.6 32.8M28.2 34.4L27.6 32.8" stroke="#2366d8" stroke-width="1.1"/>
<path d="M23.6 25 L17.4 28.8" stroke="#e53a3a" stroke-width="1.3"/><circle cx="23.6" cy="25" r="1.6" fill="#1e4fb8"/></svg>
<div class="a tx " style="left:1561.90px;top:321.00px;font-size:13.52px;color:#242424;letter-spacing:-0.462px;">EasyTimer</div>
<div class="a" style="left:1683.2px;top:258.9px;width:53.5px;height:53.8px;background:#fff;border:1px solid #c4c4c4;border-radius:5px"></div>
<svg class="a" style="left:1700px;top:276px;" width="19" height="19" viewBox="0 0 19 19"><rect x="1.2" y="1.2" width="6.6" height="6.6" fill="none" stroke="#333" stroke-width="1.1"/><rect x="10.6" y="1.2" width="6.6" height="6.6" fill="none" stroke="#333" stroke-width="1.1"/><rect x="1.2" y="10.6" width="6.6" height="6.6" fill="none" stroke="#333" stroke-width="1.1"/><rect x="10.6" y="10.6" width="6.6" height="6.6" fill="none" stroke="#333" stroke-width="1.1"/></svg>
<div class="a tx " style="left:1691.10px;top:321.00px;font-size:13.52px;color:#242424;letter-spacing:-0.500px;">See all</div>
<div class="a" style="left:1417px;top:373px;width:349.5px;height:1px;background:#e6e6e6"></div>
<div class="a tx " style="left:1416.50px;top:396.20px;font-size:17.44px;color:#1a1a1a;letter-spacing:-0.014px;-webkit-text-stroke:0.3px #1a1a1a">Popular Add-ins</div>
<div class="a" style="left:1423.3px;top:450.5px;width:40.2px;height:40.3px;background:#fff;border:1px solid #cfcfcf;border-radius:5px"></div>
<svg class="a" style="left:1429px;top:456px;" width="28" height="28" viewBox="0 0 28 28"><circle cx="14.5" cy="13.4" r="13.4" fill="#fbe08e"/><rect x="6.4" y="18.4" width="15.1" height="7.4" fill="#fff"/><path d="M6.5 25.6 V18.6 M21.5 18.6 V25.6" stroke="#5c1070" stroke-width="1"/><path d="M6.2 18.8 L18.6 15.2 V18.6 H21.8" fill="none" stroke="#3a0650" stroke-width="1.6"/><path d="M14.5 4.7 L19.4 8.6 L14.5 12.9 L9.6 8.6Z" fill="#fff" stroke="#4a0a5c" stroke-width="1.3"/><path d="M14.5 6.4 L17.4 8.6 L14.5 11.2 L11.6 8.6Z" fill="none" stroke="#e070d0" stroke-width=".9"/></svg>
<div class="a tx " style="left:1473.90px;top:444.30px;font-size:14.24px;color:#1a1a1a;letter-spacing:0.480px;-webkit-text-stroke:0.4px #1a1a1a">PowerPoint Christmas Cards b...</div>
<div class="a tx " style="left:1475.00px;top:467.20px;font-size:13.37px;color:#424242;letter-spacing:0.032px;">Access a growing collection of cust...</div>
<div class="a tx " style="left:1474.80px;top:490.00px;font-size:11.34px;color:#c43e1c;letter-spacing:0.329px;">Terms &amp; Conditions</div>
<div class="a" style="left:1475px;top:500.5px;width:103px;height:1px;background:#c43e1c"></div>
<div class="a" style="left:1712.5px;top:457.5px;width:43.4px;height:26px;background:#fff;border:1px solid #c8c8c8;border-bottom-color:#b0b0b0;border-radius:5px"></div>
<div class="a tx " style="left:1722.00px;top:463.80px;font-size:13.37px;color:#242424;letter-spacing:0.500px;">Add</div>
<div class="a" style="left:1423.3px;top:531.5px;width:40.2px;height:40.3px;background:#fff;border:1px solid #cfcfcf;border-radius:5px"></div>
<svg class="a" style="left:1429px;top:537px;" width="28" height="28" viewBox="0 0 28 28"><circle cx="14" cy="14" r="13.6" fill="#0d0d0d"/><text x="14" y="16.6" text-anchor="middle" font-size="9.4" font-weight="700" font-family="Liberation Sans" fill="#fff">GPT</text><path d="M6 19.6H22" stroke="#555" stroke-width=".8"/></svg>
<div class="a tx " style="left:1474.30px;top:525.30px;font-size:14.24px;color:#1a1a1a;letter-spacing:0.500px;-webkit-text-stroke:0.4px #1a1a1a">ChatGPT for PowerPoint</div>
<div class="a tx " style="left:1474.70px;top:548.20px;font-size:13.37px;color:#424242;letter-spacing:-0.018px;">Transform Your Creativity into Stunn...</div>
<div class="a tx " style="left:1474.80px;top:571.00px;font-size:11.34px;color:#c43e1c;letter-spacing:0.329px;">Terms &amp; Conditions</div>
<div class="a" style="left:1475px;top:581.5px;width:103px;height:1px;background:#c43e1c"></div>
<div class="a" style="left:1712.5px;top:538.5px;width:43.4px;height:26px;background:#fff;border:1px solid #c8c8c8;border-bottom-color:#b0b0b0;border-radius:5px"></div>
<div class="a tx " style="left:1722.00px;top:544.80px;font-size:13.37px;color:#242424;letter-spacing:0.500px;">Add</div>
<div class="a" style="left:1400px;top:600px;width:376px;height:41px;overflow:hidden"><div class="a" style="left:-1400px;top:-600px;width:1800px;height:1141px"><div class="a" style="left:1423.3px;top:612.5px;width:40.2px;height:40.3px;background:#fff;border:1px solid #cfcfcf;border-radius:5px"></div>
<svg class="a" style="left:1429px;top:617px;" width="28" height="24" viewBox="0 0 28 24"><ellipse cx="14" cy="20" rx="10" ry="9" fill="#e9b07a"/><ellipse cx="14" cy="21" rx="9" ry="6" fill="#ddd"/><circle cx="10" cy="20" r="3" fill="#333"/><circle cx="18" cy="20" r="3" fill="#333"/><path d="M14 4V10" stroke="#555" stroke-width="1"/></svg>
<div class="a tx " style="left:1473.90px;top:606.30px;font-size:14.24px;color:#1a1a1a;letter-spacing:0.358px;-webkit-text-stroke:0.4px #1a1a1a">R2 Copilot: Private ChatGPT</div>
<div class="a tx " style="left:1473.90px;top:629.20px;font-size:13.37px;color:#424242;letter-spacing:-0.079px;">R2 Copilot is a privacy-centric, GPT-...</div>
<div class="a" style="left:1712.5px;top:619.5px;width:43.4px;height:26px;background:#fff;border:1px solid #c8c8c8;border-bottom-color:#b0b0b0;border-radius:5px"></div>
<div class="a tx " style="left:1722.00px;top:625.80px;font-size:13.37px;color:#242424;letter-spacing:0.500px;">Add</div>
</div></div>
<div class="a" style="left:1417px;top:641px;width:350px;height:1px;background:#e3e3e3"></div>
<div class="a" style="left:1776px;top:200.5px;width:17px;height:440px;background:#f6f6f6;border-radius:8px"></div>
<svg class="a" style="left:1779px;top:204px;" width="14" height="11" viewBox="0 0 14 11"><path d="M6.8 3 L10.8 8.4 H2.8Z" fill="#6e6e6e" stroke="#6e6e6e" stroke-width="1" stroke-linejoin="round"/></svg>
<div class="a" style="left:1781.5px;top:220.7px;width:8.5px;height:94.2px;background:#7a7a7a;border-radius:4.5px"></div>
<svg class="a" style="left:1779px;top:625px;" width="14" height="11" viewBox="0 0 14 11"><path d="M6.8 8.6 L10.8 3.2 H2.8Z" fill="#6e6e6e" stroke="#6e6e6e" stroke-width="1" stroke-linejoin="round"/></svg>
<div class="a" style="left:1657px;top:663.3px;width:110.3px;height:25.7px;background:#fff;border:1px solid #c8c8c8;border-bottom-color:#b0b0b0;border-radius:5px"></div>
<svg class="a" style="left:1665px;top:667px;" width="18" height="18" viewBox="0 0 18 18"><rect x="1.2" y="1.2" width="15.4" height="15.4" fill="none" stroke="#333" stroke-width="1.2"/><path d="M8.9 4V13.8M4 8.9H13.8" stroke="#333" stroke-width="1.2"/></svg>
<div class="a tx " style="left:1686.20px;top:669.80px;font-size:13.66px;color:#242424;letter-spacing:0.070px;">Get Add-ins</div>
<div class="a" style="left:53px;top:51px;width:85.5px;height:47.7px;border:6.6px solid #f7952c;border-radius:24px"></div>
<svg class="a" style="left:36px;top:36px;" width="20" height="26" viewBox="0 0 20 26"><path d="M10 9.2 H5.9 V6.8 C8 6.6 9.6 5.6 11 3.4 H13.9 V21.9 H10Z" fill="#f7932b"/></svg>
<div class="a" style="left:1551.3px;top:78.8px;width:78.5px;height:111.2px;border:6.8px solid #f7952c;border-radius:39px/39px"></div>
<div class="a tx " style="left:1531.20px;top:79.30px;font-size:24.13px;color:#f7952c;font-weight:700;">2</div>
<div class="a" style="left:1639px;top:648px;width:143px;height:56.7px;border:6.8px solid #f7952c;border-radius:28px"></div>
<div class="a tx " style="left:1610.40px;top:662.80px;font-size:26.16px;color:#f7952c;font-weight:700;">3</div>
</body></html>
